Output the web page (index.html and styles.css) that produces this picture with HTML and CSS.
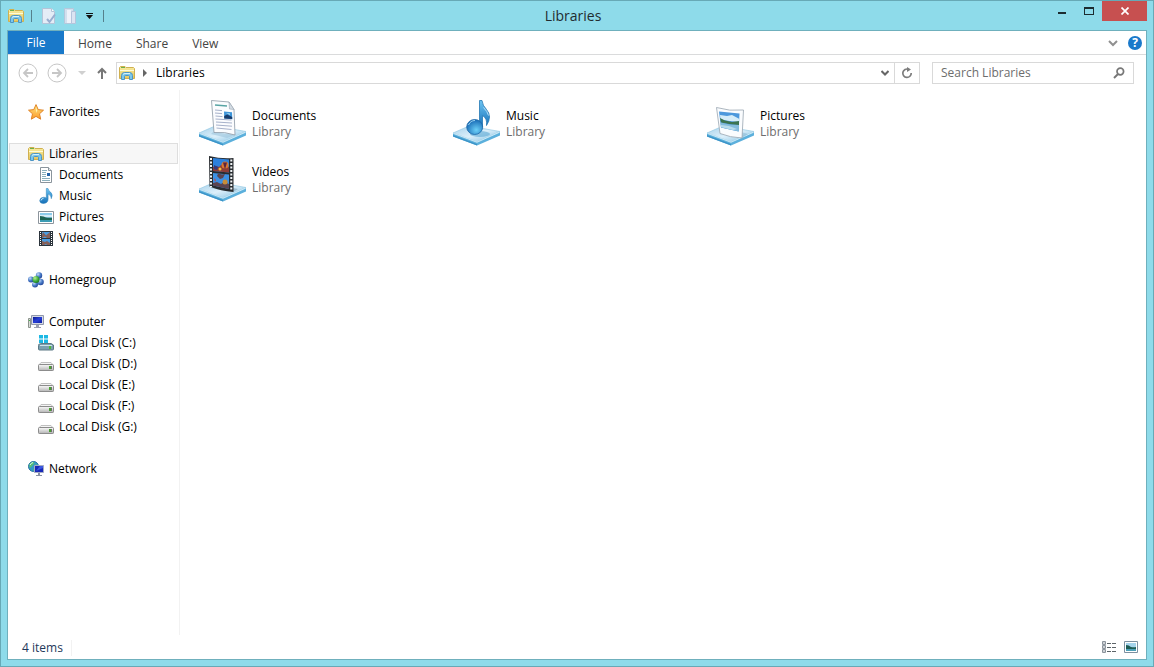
FILE: index.html
```html
<!DOCTYPE html>
<html lang="en">
<head>
    <meta charset="UTF-8">
    <meta name="viewport" content="width=device-width, initial-scale=1.0">
    <title>Libraries</title>
    <link rel="stylesheet" href="styles.css">
</head>
<body>
    <!-- Shared icons -->
    <svg class="sprite" aria-hidden="true">
        <defs>
            <linearGradient id="baseTop" x1="0" y1="0" x2="1" y2="1">
                <stop offset="0" stop-color="#a4d0ea"/>
                <stop offset=".5" stop-color="#dceffa"/>
                <stop offset="1" stop-color="#7cbce0"/>
            </linearGradient>
            <linearGradient id="folderFill" x1="0" y1="0" x2="0" y2="1">
                <stop offset="0" stop-color="#f8eda0"/>
                <stop offset="1" stop-color="#e6c660"/>
            </linearGradient>
            <linearGradient id="blueFill" x1="0" y1="0" x2="0" y2="1">
                <stop offset="0" stop-color="#6cc4f2"/>
                <stop offset="1" stop-color="#1670b8"/>
            </linearGradient>
            <linearGradient id="starFill" x1="0" y1="0" x2="0" y2="1">
                <stop offset="0" stop-color="#ffe682"/>
                <stop offset="1" stop-color="#fb9a28"/>
            </linearGradient>
            <linearGradient id="skyFill" x1="0" y1="0" x2="0" y2="1">
                <stop offset="0" stop-color="#2a78c8"/>
                <stop offset=".5" stop-color="#c4e4f4"/>
                <stop offset=".55" stop-color="#3f7f58"/>
                <stop offset="1" stop-color="#5aa4c4"/>
            </linearGradient>
            <linearGradient id="diskFill" x1="0" y1="0" x2="0" y2="1">
                <stop offset="0" stop-color="#fafafa"/>
                <stop offset="1" stop-color="#b4b4b4"/>
            </linearGradient>
            <linearGradient id="screenFill" x1="0" y1="0" x2="1" y2="1">
                <stop offset="0" stop-color="#0a1890"/>
                <stop offset=".5" stop-color="#2840d8"/>
                <stop offset="1" stop-color="#0c1ca0"/>
            </linearGradient>
            <radialGradient id="ballBlue" cx=".35" cy=".3" r=".8">
                <stop offset="0" stop-color="#c4dcf8"/>
                <stop offset=".5" stop-color="#4a7cc8"/>
                <stop offset="1" stop-color="#1c3c90"/>
            </radialGradient>
            <radialGradient id="ballGreen" cx=".35" cy=".3" r=".8">
                <stop offset="0" stop-color="#b8f090"/>
                <stop offset=".6" stop-color="#38a838"/>
                <stop offset="1" stop-color="#187020"/>
            </radialGradient>
            <radialGradient id="noteHead" cx=".6" cy=".7" r=".7">
                <stop offset="0" stop-color="#6cd0f8"/>
                <stop offset="1" stop-color="#1668b4"/>
            </radialGradient>
        </defs>

        <symbol id="i-libraries" viewBox="0 0 16 16">
            <path d="M.5 2.500 1.500 1.500H6l1 1h7.500l1 1v10h-15z" fill="url(#folderFill)" stroke="#d0b050"/>
            <path d="M2 2.500h4" stroke="#6cb04c"/>
            <path d="M1 5.500h14" stroke="#fffbd8"/>
            <path d="M2.500 14.500v-4q0-3 3-3h5q3 0 3 3v4h-3v-3q0-1-1-1h-3q-1 0-1 1v3z" fill="#7cc8ec" stroke="#4c94c4"/>
            <path d="M4 9.500q1-1 2-1h5" fill="none" stroke="#d4f2fc"/>
        </symbol>

        <symbol id="i-star" viewBox="0 0 16 16">
            <path d="M8 .6 10.200 5.600 15.500 6.200 11.500 9.800 12.700 15.200 8 12.400 3.300 15.200 4.500 9.800.5 6.200 5.800 5.600z" fill="url(#starFill)" stroke="#e08428" stroke-linejoin="round"/>
            <path d="M8 3 9.200 6.500 8 9z" fill="#fff2b0"/>
        </symbol>

        <symbol id="i-document" viewBox="0 0 16 16">
            <path d="M2.500.5h8l3 3v12h-11z" fill="#fff" stroke="#8a949c"/>
            <path d="M10.500.5v3h3" fill="#e4e8ec" stroke="#8a949c"/>
            <path d="M4 3.500h5M4 5.500h4M4 7.500h4M4 9.500h4M4 11.500h8M4 13.500h8" stroke="#8cb0bc"/>
            <path d="M9 6h3v3H9z" fill="#2464a8"/>
        </symbol>

        <symbol id="i-music" viewBox="0 0 16 16">
            <path d="M8.300.5H10q.3 2 2.500 3.600 3 2.500.8 6.600.3-3.200-3.200-4.700V11q0 4-4.400 4.500-3.700.2-4-2.700.2-3.400 4-3.600 1.500 0 2.600.8z" fill="url(#blueFill)" stroke="#2c80b8" stroke-width=".5"/>
            <path d="M3 12.500q.5-2 2.500-2.200" stroke="#c4e8fa" fill="none"/>
        </symbol>

        <symbol id="i-picture" viewBox="0 0 16 16">
            <path d="M.5 2.500h15v12H.5z" fill="#fff" stroke="#8c949c"/>
            <path d="M2 4h12v9H2z" fill="#8cccec"/>
            <path d="M2 6h12v2H2z" fill="#d4ecf8"/>
            <path d="M2 7q4 0 6 1.500 3 .6 6 .2V11H2z" fill="#1c6454"/>
            <path d="M2 11h12v2H2z" fill="#3c9cb4"/>
        </symbol>

        <symbol id="i-video" viewBox="0 0 16 16">
            <path d="M1 1h14v15H1z" fill="#2c343c"/>
            <path d="M4 2h8v6H4zM4 9h8v6H4z" fill="#4c9ce0"/>
            <path d="m5 2 3 3.500L12 2v6H9L7 6.500 4 8V5zM4 11l3 1 2-1 3 2v2H9l-1-1-2 1H4z" fill="#85605a"/>
            <path d="M2.500 2v13M13.500 2v13" stroke="#fff" stroke-dasharray="1 1"/>
        </symbol>

        <symbol id="i-homegroup" viewBox="0 0 16 16">
            <circle cx="11" cy="3.500" r="3.200" fill="url(#ballBlue)"/>
            <circle cx="3" cy="7.500" r="3" fill="url(#ballBlue)"/>
            <circle cx="12.500" cy="10" r="3.300" fill="url(#ballBlue)"/>
            <circle cx="7" cy="12.500" r="3" fill="url(#ballBlue)"/>
            <circle cx="8" cy="7.500" r="3.500" fill="url(#ballGreen)"/>
        </symbol>

        <symbol id="i-computer" viewBox="0 0 16 16">
            <path d="M.5 4.500h2v9h-2z" fill="#d8dcd8" stroke="#8c948c"/>
            <path d="M1 6.500h1" stroke="#48b048"/>
            <path d="M3.500 1.500h12v9h-12z" fill="#d4d8e4" stroke="#9098ac"/>
            <path d="M5 3h9v6H5z" fill="url(#screenFill)"/>
            <path d="M8 11h3v2h2v1H6v-1h2z" fill="#9ca0b0"/>
        </symbol>

        <symbol id="i-disk" viewBox="0 0 16 16">
            <path d="M3 6.500h10l2.500 3v4q0 1-1 1h-13q-1 0-1-1v-4z" fill="#f4f4f4" stroke="#c0c0c0"/>
            <path d="M.5 9.500q0-1 1-1h13q1 0 1 1v4q0 1-1 1h-13q-1 0-1-1z" fill="url(#diskFill)" stroke="#8c8c8c"/>
            <path d="M11 10h2v3h-2z" fill="#48a030"/>
            <path d="M13.500 10v3" stroke="#707070"/>
        </symbol>

        <symbol id="i-disk-system" viewBox="0 0 16 16">
            <path d="M1 0h4v3.500H1zM6 0h4v3.500H6zM1 4.500h4V8H1zM6 4.500h4V8H6z" fill="#1cb8e4"/>
            <path d="M.5 10.500q0-1.500 1-1.500L4 8.500h9l2.500 1.500v4q0 1-1 1h-13q-1 0-1-1z" fill="#7ca0b0" stroke="#5c7884"/>
            <path d="M2 10.500h12" stroke="#d0e4ec"/>
            <path d="M11 11h2v3h-2z" fill="#50b838"/>
        </symbol>

        <symbol id="i-network" viewBox="0 0 16 16">
            <circle cx="5.500" cy="5.500" r="5" fill="#3498c8" stroke="#2474a0"/>
            <path d="M3 1.500Q6 .5 6.500 2L4 5l-2 2q-2-3 1-5.500zM8 3l2 2H7zM5 8l2 1-1 1.500z" fill="#58c070"/>
            <path d="M2 4q1-2 3-2.500" stroke="#d8f4f8" fill="none"/>
            <path d="M6.500 4.500h9v7h-9z" fill="#1828b8" stroke="#a4acc4"/>
            <path d="m8 10 4-5h3v2z" fill="#3c58e0"/>
            <path d="M10 12h2v2h2v1H8v-1h2z" fill="#8890a4"/>
        </symbol>

        <symbol id="i-base" viewBox="0 0 48 48">
            <path d="M1 35 25 44l23-10v3.500L25 47.500 1 38.500z" fill="#5cb0dc"/>
            <path d="M1 37 25 46v1.500L1 38.500z" fill="#3c94c8"/>
            <path d="M1 35 17 28l31 5.500L25 44z" fill="url(#baseTop)" stroke="#8cc4e0" stroke-width=".6"/>
            <path d="M1.500 35.500 25 44.300l22.500-10" fill="none" stroke="#d8f0fa" stroke-width=".8"/>
        </symbol>
    </svg>

    <div class="window">
        <header class="titlebar">
            <div class="quick-access">
                <svg class="icon"><use href="#i-libraries"/></svg>
                <span class="separator"></span>
                <button type="button" class="quick-button properties" aria-label="Properties">
                    <svg class="icon" viewBox="0 0 16 16">
                        <path d="M1.500.5h9l3 3v12h-12z" fill="#e4ecf6" stroke="#b4c4d8"/>
                        <path d="M10.500.5v3h3" fill="#fff" stroke="#b4c4d8"/>
                        <path d="m6 11 2.500 3L14 6.500" fill="none" stroke="#98aed0" stroke-width="2"/>
                    </svg>
                </button>
                <button type="button" class="quick-button new-folder" aria-label="New folder">
                    <svg class="icon" viewBox="0 0 16 16">
                        <path d="M2.500.5h9v15h-9z" fill="#d2e0ee" stroke="#b4c8dc"/>
                        <path d="M5 2h4v13H5z" fill="#eef2fa"/>
                        <path d="M9.500 3.500h4v12h-4z" fill="#dce4f2" stroke="#b4c4dc"/>
                    </svg>
                </button>
                <button type="button" class="quick-button customize" aria-label="Customize Quick Access Toolbar">
                    <svg width="9" height="6" viewBox="0 0 9 6">
                        <path d="M1 0h7v1H1zM1 2h7L4.500 6z" fill="#111"/>
                    </svg>
                </button>
                <span class="separator"></span>
            </div>
            <h1 class="title">Libraries</h1>
            <div class="window-controls">
                <button type="button" class="control" aria-label="Minimize">
                    <svg width="12" height="10" viewBox="0 0 12 10"><path d="M2 6h8v2H2z" fill="#1c2c30"/></svg>
                </button>
                <button type="button" class="control" aria-label="Maximize">
                    <svg width="12" height="10" viewBox="0 0 12 10"><path d="M1 1h10v8H1zM2 3v5h8V3z" fill="#1c2c30" fill-rule="evenodd"/></svg>
                </button>
                <button type="button" class="control close" aria-label="Close">
                    <svg width="8" height="8" viewBox="0 0 8 8"><path d="m.5.5 7 7m0-7-7 7" stroke="#fff" stroke-width="1.700"/></svg>
                </button>
            </div>
        </header>

        <div class="client">
            <nav class="ribbon">
                <button type="button" class="tab file">File</button>
                <button type="button" class="tab">Home</button>
                <button type="button" class="tab">Share</button>
                <button type="button" class="tab">View</button>
                <div class="ribbon-tools">
                    <button type="button" class="plain" aria-label="Expand the Ribbon">
                        <svg width="10" height="8" viewBox="0 0 10 8"><path d="m1 2 4 4 4-4" fill="none" stroke="#909090" stroke-width="2"/></svg>
                    </button>
                    <button type="button" class="help" aria-label="Help">?</button>
                </div>
            </nav>

            <div class="navbar">
                <div class="history">
                    <button type="button" class="plain" aria-label="Back">
                        <svg width="20" height="20" viewBox="0 0 20 20" fill="none" stroke="#c6c6c6">
                            <circle cx="10" cy="10" r="9"/>
                            <path d="M15 10H6m4-4-4 4 4 4" stroke-width="1.800"/>
                        </svg>
                    </button>
                    <button type="button" class="plain" aria-label="Forward">
                        <svg width="20" height="20" viewBox="0 0 20 20" fill="none" stroke="#c6c6c6">
                            <circle cx="10" cy="10" r="9"/>
                            <path d="M5 10h9m-4-4 4 4-4 4" stroke-width="1.800"/>
                        </svg>
                    </button>
                    <button type="button" class="plain recent" aria-label="Recent locations">
                        <svg width="8" height="4" viewBox="0 0 8 4"><path d="M0 0h8L4 4z" fill="#d0d0d0"/></svg>
                    </button>
                    <button type="button" class="plain" aria-label="Up">
                        <svg width="10" height="12" viewBox="0 0 10 12"><path d="M5 12V2M1 6l4-4 4 4" fill="none" stroke="#777" stroke-width="2"/></svg>
                    </button>
                </div>
                <div class="address">
                    <svg class="icon"><use href="#i-libraries"/></svg>
                    <svg class="crumb-arrow" width="4" height="8" viewBox="0 0 4 8"><path d="m0 0 4 4-4 4z" fill="#666"/></svg>
                    <a href="#" class="crumb">Libraries</a>
                    <button type="button" class="plain address-drop" aria-label="Previous locations">
                        <svg width="8" height="6" viewBox="0 0 8 6"><path d="m.5 1 3.500 3.500L7.500 1" fill="none" stroke="#666" stroke-width="2"/></svg>
                    </button>
                    <button type="button" class="plain refresh" aria-label="Refresh">
                        <svg width="12" height="12" viewBox="0 0 12 12">
                            <path d="M7.500 2.300A4.200 4.200 0 1 0 10.200 6" fill="none" stroke="#7c7c7c" stroke-width="1.700"/>
                            <path d="M6 5V0l4 2.500z" fill="#7c7c7c"/>
                        </svg>
                    </button>
                </div>
                <form class="search">
                    <input type="search" aria-label="Search Libraries" placeholder="Search Libraries">
                    <button type="button" class="plain" aria-label="Search">
                        <svg width="12" height="12" viewBox="0 0 12 12" fill="none" stroke="#777"><circle cx="7.300" cy="4.500" r="3.300" stroke-width="1.700"/><path d="M5 7 1 11" stroke-width="2"/></svg>
                    </button>
                </form>
            </div>

            <div class="main">
                <aside class="sidebar">
                    <ul class="tree">
                        <li><a href="#"><svg class="icon"><use href="#i-star"/></svg>Favorites</a></li>
                    </ul>
                    <ul class="tree">
                        <li><a href="#" class="selected"><svg class="icon"><use href="#i-libraries"/></svg>Libraries</a></li>
                        <li class="child"><a href="#"><svg class="icon"><use href="#i-document"/></svg>Documents</a></li>
                        <li class="child"><a href="#"><svg class="icon"><use href="#i-music"/></svg>Music</a></li>
                        <li class="child"><a href="#"><svg class="icon"><use href="#i-picture"/></svg>Pictures</a></li>
                        <li class="child"><a href="#"><svg class="icon"><use href="#i-video"/></svg>Videos</a></li>
                    </ul>
                    <ul class="tree">
                        <li><a href="#"><svg class="icon"><use href="#i-homegroup"/></svg>Homegroup</a></li>
                    </ul>
                    <ul class="tree">
                        <li><a href="#"><svg class="icon"><use href="#i-computer"/></svg>Computer</a></li>
                        <li class="child"><a href="#"><svg class="icon"><use href="#i-disk-system"/></svg>Local Disk (C:)</a></li>
                        <li class="child"><a href="#"><svg class="icon"><use href="#i-disk"/></svg>Local Disk (D:)</a></li>
                        <li class="child"><a href="#"><svg class="icon"><use href="#i-disk"/></svg>Local Disk (E:)</a></li>
                        <li class="child"><a href="#"><svg class="icon"><use href="#i-disk"/></svg>Local Disk (F:)</a></li>
                        <li class="child"><a href="#"><svg class="icon"><use href="#i-disk"/></svg>Local Disk (G:)</a></li>
                    </ul>
                    <ul class="tree">
                        <li><a href="#"><svg class="icon"><use href="#i-network"/></svg>Network</a></li>
                    </ul>
                </aside>

                <main class="files">
                    <a href="#" class="tile">
                        <svg class="tile-icon" viewBox="0 0 48 48">
                            <use href="#i-base"/>
                            <path d="m15 34 22 3-8 3-16-4z" fill="#9cc4dc" opacity=".6"/>
                            <path d="M13.500 2.500 31 4l5 7.500 1 25.500q-10-3.500-21-2.500z" fill="#fbfcfe" stroke="#8c98a4" stroke-width=".8"/>
                            <path d="m31 4 .5 7 4.500.5z" fill="#d4dce4" stroke="#9ca8b4" stroke-width=".6"/>
                            <path d="m17 7 12 1" stroke="#58a4a4" stroke-width="1.500"/>
                            <path d="m17 12 7 .6M17 15l7 .6M17.500 18l7 .6M17.500 21l16 1M18 24l16 1M18 27l16 1.200M18.500 30l15 1.500" stroke="#9ca8c4" stroke-width=".9"/>
                            <path d="m26 13.500 8 .7.300 7-8-.700z" fill="#3c94d8"/>
                            <path d="m26.200 18 3-1.500 5 2.500v2l-8-.500z" fill="#183c6c"/>
                            <path d="m28 15 4 .5v1.500z" fill="#b4e0f4"/>
                        </svg>
                        <span class="tile-text">
                            <span class="tile-name">Documents</span>
                            <span class="tile-type">Library</span>
                        </span>
                    </a>
                    <a href="#" class="tile">
                        <svg class="tile-icon" viewBox="0 0 48 48">
                            <use href="#i-base"/>
                            <ellipse cx="28" cy="36" rx="10" ry="3" fill="#5ca8d4" opacity=".6"/>
                            <path d="M27.500 2.500H30q.5 5 4.500 9 6 7 0 16 1-7-4-10V29h-3z" fill="url(#blueFill)" stroke="#2478b4" stroke-width=".8"/>
                            <path d="M31.500 9.500q4 4 5 8" stroke="#b4e0f8" fill="none"/>
                            <ellipse cx="22.700" cy="29" rx="8" ry="7.500" fill="url(#noteHead)" stroke="#1c68a8" stroke-width=".8"/>
                            <path d="M16.500 27q2-4.500 6.500-4.500" stroke="#9cd4f4" fill="none"/>
                        </svg>
                        <span class="tile-text">
                            <span class="tile-name">Music</span>
                            <span class="tile-type">Library</span>
                        </span>
                    </a>
                    <a href="#" class="tile">
                        <svg class="tile-icon" viewBox="0 0 48 48">
                            <use href="#i-base"/>
                            <path d="m14 35 22 5 6-4-22-6z" fill="#84b4d0" opacity=".5"/>
                            <path d="M10.500 9.500q13 4 27 2.500L36 40q-12-.5-22-4.500z" fill="#fafcfe" stroke="#98a4b0" stroke-width=".8"/>
                            <path d="m13 13.500 20.500 2-.800 18-17.700-4z" fill="#4c98dc"/>
                            <path d="m14 17 7 1 5-1 7.500 4v3l-10-1-9-1.500z" fill="#d4ecf8"/>
                            <path d="m14 20 5 2.500 7 1.500 7-1v4l-7-.500-11-2z" fill="#3c7450"/>
                            <path d="m14.500 24.500 9 2 9.500.5-.300 6.500L15 29.500z" fill="#84bcdc"/>
                            <path d="m15 27 8 1 8 3-4 1-12-3z" fill="#b8dcec"/>
                        </svg>
                        <span class="tile-text">
                            <span class="tile-name">Pictures</span>
                            <span class="tile-type">Library</span>
                        </span>
                    </a>
                    <a href="#" class="tile">
                        <svg class="tile-icon" viewBox="0 0 48 48">
                            <use href="#i-base"/>
                            <path d="m13 34 22 4 5-3-20-4z" fill="#84a4b8" opacity=".6"/>
                            <path d="M11 2q12 3 24.500 2v34Q23 37 11.500 32.500z" fill="#282c30"/>
                            <path d="m15 4 16 1.500v13L15 17z" fill="#2c80dc"/>
                            <path d="m15 19 16 1.500V35l-16-3.500z" fill="#3c90e4"/>
                            <path d="m15 13 3-1 3 1 2-2 3-1 5 3v5.500L15 17z" fill="#8c3c38"/>
                            <circle cx="27" cy="11" r="3.500" fill="#d87830"/>
                            <path d="M25 8.500h4l-2 7z" fill="#5c2440"/>
                            <path d="m16 11 4 2-1 3-3-1z" fill="#303c80"/>
                            <circle cx="22" cy="15" r="1.500" fill="#f0c040"/>
                            <path d="m20 19.500 4 1 3-.5-2 4-3 1-3-3zM15 29l4-1 4 2 3-2 5 2v5l-16-3.500z" fill="#5c4450"/>
                            <circle cx="27" cy="28" r="2.500" fill="#c88c38"/>
                            <path d="m16 24 2 2-1 2z" fill="#d04838"/>
                            <path d="M13 4v29M33.300 5.500V37" stroke="#f0f4f6" stroke-width="2" stroke-dasharray="2 1.500"/>
                        </svg>
                        <span class="tile-text">
                            <span class="tile-name">Videos</span>
                            <span class="tile-type">Library</span>
                        </span>
                    </a>
                </main>
            </div>

            <footer class="statusbar">
                <span class="count">4 items</span>
                <div class="views">
                    <button type="button" class="plain" aria-label="Details view">
                        <svg width="16" height="14" viewBox="0 0 16 14">
                            <path d="M1.500 1.500h3v3h-3zM1.500 5.500h3v3h-3zM1.500 9.500h3v3h-3z" fill="#fff" stroke="#8c949c"/>
                            <path d="M6 3.500h4M11 3.500h4M6 7.500h4M11 7.500h4M6 11.500h4M11 11.500h4" stroke="#5c6468"/>
                            <path d="M2.500 3h1M2.500 7h1M2.500 11h1" stroke="#344454"/>
                        </svg>
                    </button>
                    <button type="button" class="plain" aria-label="Large icons view">
                        <svg width="14" height="12" viewBox="0 0 14 12">
                            <path d="M.5.5h13v11H.5z" fill="#fff" stroke="#7c90a0"/>
                            <path d="M2 2h10v8H2z" fill="#a4d4ec"/>
                            <path d="M2 4q3 0 5 2 3 .5 5 0v2H2z" fill="#1c5c54"/>
                            <path d="M2 8h10v2H2z" fill="#4ca0b8"/>
                        </svg>
                    </button>
                </div>
            </footer>
        </div>
    </div>
</body>
</html>
```
FILE: styles.css
```css
* {
    box-sizing: border-box;
}

body {
    margin: 0;
    font-family: "Open Sans", "Noto Sans", sans-serif;
    font-size: 12px;
    line-height: 16px;
    color: #000;
}

a {
    color: inherit;
    text-decoration: none;
}

button {
    font: inherit;
    color: inherit;
    padding: 0;
    border: none;
    background: none;
}

svg {
    display: block;
    flex: none;
}

.sprite {
    position: absolute;
    width: 0;
    height: 0;
}

.icon {
    width: 16px;
    height: 16px;
}

.plain {
    display: flex;
    align-items: center;
    justify-content: center;
}

/* Window frame */
.window {
    display: flex;
    flex-direction: column;
    min-height: 100vh;
    padding: 0 6px 6px;
    border: 1px solid #67a9b6;
    background-color: #8edbea;
}

.titlebar {
    display: grid;
    grid-template-columns: 1fr auto 1fr;
    height: 29px;
}

.quick-access {
    display: flex;
    align-items: center;
    gap: 7px;
    padding-left: 1px;
}

.separator {
    width: 1px;
    height: 12px;
    background-color: #55808c;
}

.properties {
    margin-left: 2px;
}

.new-folder {
    margin-left: -2px;
}

.customize {
    margin-right: 2px;
}

.title {
    margin: 0 8px 0 0;
    font-size: 14px;
    font-weight: normal;
    line-height: 29px;
    color: #222c30;
}

.window-controls {
    display: flex;
    align-items: flex-start;
    justify-content: flex-end;
}

.control {
    display: flex;
    align-items: center;
    justify-content: center;
    width: 27px;
    height: 20px;
}

.close {
    width: 45px;
    background-color: #c75050;
}

.client {
    display: flex;
    flex-direction: column;
    flex: 1;
    border: 1px solid #6fb0bd;
    background-color: #fff;
}

/* Ribbon */
.ribbon {
    display: flex;
    height: 24px;
    border-bottom: 1px solid #dadbdc;
}

.tab {
    padding: 3px 12px 0;
    color: #444;
}

.tab.file {
    width: 56px;
    margin-right: 2px;
    padding: 1px 0 0;
    background-color: #1979ca;
    color: #fff;
}

.ribbon-tools {
    display: flex;
    align-items: center;
    gap: 10px;
    margin-left: auto;
    padding-right: 4px;
}

.help {
    width: 14px;
    height: 14px;
    border-radius: 50%;
    background-color: #1979ca;
    color: #fff;
    font-weight: bold;
    line-height: 14px;
}

/* Address and search */
.navbar {
    display: flex;
    align-items: center;
    gap: 12px;
    height: 35px;
    padding: 0 12px 0 10px;
}

.history {
    display: flex;
    align-items: center;
    gap: 9px;
}

.recent {
    width: 8px;
    margin: 0 2px;
}

.history .plain:last-child {
    margin-right: -3px;
}

.address {
    display: flex;
    align-items: center;
    flex: 1;
    height: 22px;
    padding-left: 2px;
    border: 1px solid #d9d9d9;
}

.crumb-arrow {
    margin: 0 9px 0 8px;
}

.crumb {
    flex: 1;
}

.address-drop {
    width: 18px;
    height: 20px;
}

.refresh {
    width: 25px;
    height: 20px;
    border-left: 1px solid #d9d9d9;
}

.search {
    display: flex;
    align-items: center;
    width: 202px;
    height: 22px;
    padding: 0 8px;
    border: 1px solid #d9d9d9;
}

.search input {
    flex: 1;
    min-width: 0;
    padding: 0;
    border: none;
    outline: none;
    background: none;
    font: inherit;
}

.search input::placeholder {
    color: #6d6d6d;
    opacity: 1;
}

/* Main area */
.main {
    display: flex;
    flex: 1;
}

.sidebar {
    width: 172px;
    padding: 11px 1px 0;
    border-right: 1px solid #f2f2f2;
}

.tree {
    margin: 0 0 21px;
    padding: 0;
    list-style: none;
}

.tree a {
    display: flex;
    align-items: center;
    gap: 5px;
    height: 21px;
    padding-left: 18px;
    border: 1px solid transparent;
}

.tree .child a {
    padding-left: 28px;
}

.tree .selected {
    border-color: #dedede;
    background-color: #f7f7f7;
}

.files {
    display: grid;
    grid-template-columns: repeat(auto-fill, 254px);
    grid-auto-rows: 56px;
    flex: 1;
    padding: 4px 18px 0;
}

.tile {
    display: flex;
    align-items: center;
    gap: 6px;
}

.tile-icon {
    width: 48px;
    height: 48px;
}

.tile-text {
    display: flex;
    flex-direction: column;
    padding-top: 4px;
}

.tile-type {
    color: #6d6d6d;
}

/* Status bar */
.statusbar {
    display: flex;
    align-items: center;
    justify-content: space-between;
    height: 24px;
    padding: 0 8px 0 14px;
    color: #1e395b;
}

.count {
    margin-top: 2px;
    padding-right: 8px;
    border-right: 1px solid #f2f2f2;
}

.views {
    display: flex;
    align-items: center;
    gap: 7px;
}
```
